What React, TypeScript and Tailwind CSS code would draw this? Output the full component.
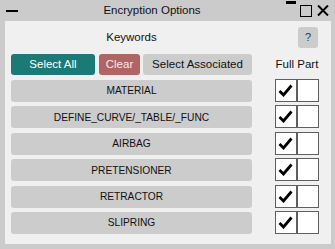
import React from "react";

const keywords = [
  "MATERIAL",
  "DEFINE_CURVE/_TABLE/_FUNC",
  "AIRBAG",
  "PRETENSIONER",
  "RETRACTOR",
  "SLIPRING",
];

function Check() {
  return (
    <svg width="15" height="13" viewBox="0 0 15 13">
      <path d="M1.5 7 L5.5 11 L13.5 1.5" fill="none" stroke="#000" strokeWidth="2.8" />
    </svg>
  );
}

export default function App() {
  return (
    <div
      className="w-[335px] h-[249px] bg-[#cbcbcb] flex flex-col text-[11px] text-[#111] whitespace-nowrap"
      style={{ fontFamily: '"Liberation Sans", Arial, sans-serif' }}
    >
      {/* title bar */}
      <div className="h-[21px] flex items-center shrink-0">
        <div className="w-[12px] h-[2px] bg-black ml-[6px]" />
        <div className="flex-1 text-center text-[11.5px]">Encryption Options</div>
        <div className="flex items-center mr-[6px]">
          <div className="w-[10px] h-[3px] bg-black self-start mt-[-4px]" />
          <div className="w-[12px] h-[12px] border border-black ml-[4px]" />
          <svg width="12" height="11" viewBox="0 0 12 11" className="ml-[5px]">
            <path d="M1 0.5 L11 10.5 M11 0.5 L1 10.5" stroke="#000" strokeWidth="2" />
          </svg>
        </div>
      </div>

      {/* content */}
      <div className="flex-1 ml-[5px] mr-[4px] mb-[5px] bg-[#f0f0f0] pl-[6px] pt-[6px]">
        <div className="grid grid-cols-[241px_44px] gap-x-[23px]">
          <div className="h-[21px] flex items-center justify-center text-[11.5px]">Keywords</div>
          <div className="h-[21px] flex justify-end pr-[1px]">
            <div className="w-[20px] h-[21px] rounded-[3px] bg-[#cccccc] text-[#2a3a5a] flex items-center justify-center">
              ?
            </div>
          </div>

          <div className="mt-[6px] h-[21px] flex gap-[4px] text-[11.5px]">
            <button className="w-[84px] rounded-[3px] bg-[#1b7a76] text-white">Select All</button>
            <button className="w-[41px] rounded-[3px] bg-[#b06464] text-[#f6eaea]">Clear</button>
            <button className="w-[109px] rounded-[3px] bg-[#cccccc] ml-[-1px]">Select Associated</button>
          </div>
          <div className="mt-[6px] h-[21px] flex items-center justify-center text-[11.5px]">Full Part</div>
        </div>

        <div className="flex flex-col gap-[5.4px] mt-[5px]">
          {keywords.map((k) => (
            <div key={k} className="grid grid-cols-[241px_44px] gap-x-[23px] h-[21px]">
              <div className="rounded-[3px] bg-[#cccccc] flex items-center justify-center text-[10.2px]">{k}</div>
              <div className="flex mt-[-1px] h-[23px]">
                <div className="w-[22px] h-[23px] border border-[#5f5f5f] bg-white flex items-center pl-[2px]">
                  <Check />
                </div>
                <div className="w-[22px] h-[23px] border border-[#5f5f5f] bg-white" />
              </div>
            </div>
          ))}
        </div>
      </div>
    </div>
  );
}
